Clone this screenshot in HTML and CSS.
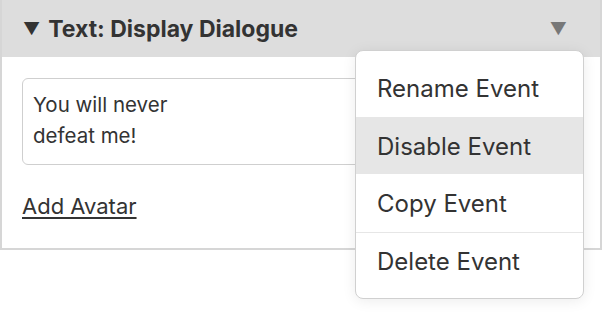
FILE: index.html
```html
<!DOCTYPE html>
<html lang="en">
<head>
  <meta charset="UTF-8" />
  <title>Event Editor</title>
  <link rel="stylesheet" href="styles.css">
</head>
<body>

  <div class="event">
    <div class="event-header">
      <span class="caret">▼</span>
      <span class="event-title">Text: Display Dialogue</span>
      <button class="menu-btn">▼</button>
    </div>

    <div class="event-body">
      <div class="dialogue">You will never<br>defeat me!</div>
      <a class="add-avatar" href="#">Add Avatar</a>
    </div>

    <!-- context menu for the event -->
    <div class="menu">
      <div class="menu-item">Rename Event</div>
      <div class="menu-item hover">Disable Event</div>
      <div class="menu-item">Copy Event</div>
      <div class="menu-item divider">Delete Event</div>
    </div>
  </div>

</body>
</html>
```

FILE: styles.css
```css
* {
  margin: 0;
  padding: 0;
  box-sizing: border-box;
}

html, body {
  min-height: 320px;
}

body {
  background-color: #fff;
  color: #333;
  font-family: Inter, 'Noto Sans', sans-serif;
}

.event {
  position: relative;
  width: 602px;
  height: 250px;
  border: 2px solid #d6d6d6;
  border-top: none;
}

.event-header {
  height: 57px;
  background-color: #dddddd;
  display: flex;
  align-items: center;
  padding: 0 20px 0 21px;
  color: #333;
}

.caret {
  font-size: 17px;
  margin-right: 8px;
}

.event-title {
  font-size: 23px;
  font-weight: bold;
  flex: 1;
}

.menu-btn {
  background: none;
  border: none;
  color: #777;
  font-size: 17px;
  margin-right: 13px;
  font-family: inherit;
}

.event-body {
  padding: 21px 20px 0 20px;
}

.dialogue {
  width: 558px;
  height: 87px;
  border: 1.5px solid #cfcfcf;
  border-radius: 6px;
  padding: 10px 10px;
  font-size: 20.5px;
  line-height: 31px;
  color: #333;
}

.add-avatar {
  display: inline-block;
  margin-top: 28px;
  font-size: 22px;
  color: #333;
  text-underline-offset: 3px;
}

.menu {
  position: absolute;
  left: 353px;
  top: 50px;
  width: 229px;
  background-color: #fff;
  border: 1.5px solid #d0d0d0;
  border-radius: 8px;
  padding: 8px 0 9px 0;
  box-shadow: 0 2px 14px rgba(0, 0, 0, 0.08);
}

.menu-item {
  height: 57.5px;
  display: flex;
  align-items: center;
  padding: 2px 0 0 21px;
  font-size: 24px;
  color: #333;
}

.menu-item.hover {
  background-color: #e6e6e6;
}

.menu-item.divider {
  border-top: 1.5px solid #e6e6e6;
}
```
